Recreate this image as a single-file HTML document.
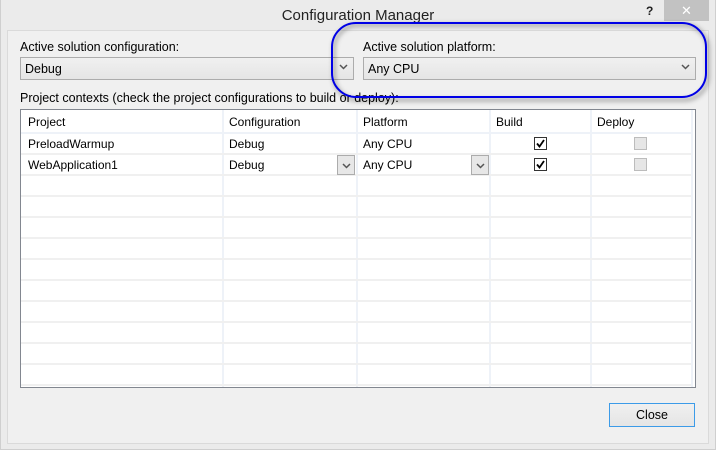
<!DOCTYPE html>
<html><head><meta charset="utf-8"><style>
*{box-sizing:border-box;margin:0;padding:0}
body{width:716px;height:450px;background:#ebebeb;font-family:"Liberation Sans",sans-serif;font-size:12px;color:#000;position:relative;overflow:hidden}
.a{position:absolute}
.outer{left:0;top:0;width:716px;height:450px;border:1px solid #cfcfcf;border-top:none}
.panel{left:7px;top:30px;width:702px;height:414px;background:#f0f0f0;border:1px solid #dadada}
.combo{height:23px;border:1px solid #acacac;background:linear-gradient(#f0f0f0,#e5e5e5);padding:4px 0 0 4px;font-size:12.5px}
.arr{position:absolute;right:5px;top:4px;width:9px;height:9px}
.grid{left:20px;top:109px;width:676px;height:279px;background:#fff;border:1px solid #828790}
.vl{position:absolute;top:0;width:2px;height:277px;background:#eef2f8}
.hl{position:absolute;left:0;width:670px;height:2px;background:#f0f0f0}
.t{position:absolute;font-size:12px}
.sb{position:absolute;width:18px;height:20px;border:1px solid #acacac;background:#e7e7e7}
.cb{position:absolute;width:13px;height:13px;border:1px solid #333;background:#fff}
.cbd{position:absolute;width:13px;height:13px;border:1px solid #bcbcbc;background:#e6e6e6}
</style></head><body>
<div class="a outer"></div>
<div class="a" style="left:0;top:0;width:716px;height:30px;text-align:center;font-size:15px;padding-top:7px;color:#222">Configuration Manager</div>
<div class="a" style="left:646px;top:4px;font-weight:bold;font-size:12px;color:#222">?</div>
<div class="a" style="left:664px;top:0;width:45px;height:21px;background:#c2c2c2;color:#fff;text-align:center;font-size:13px;line-height:21px">✕</div>
<div class="a panel"></div>
<div class="a" style="left:20px;top:40px;font-size:12.5px">Active solution configuration:</div>
<div class="a combo" style="left:20px;top:57px;width:334px">Debug<svg class="arr" viewBox="0 0 9 9"><path d="M1 3 L4.5 6.5 L8 3" stroke="#555" stroke-width="1.5" fill="none"/></svg></div>
<div class="a" style="left:363px;top:40px;font-size:12.5px">Active solution platform:</div>
<div class="a combo" style="left:363px;top:57px;width:333px">Any CPU<svg class="arr" viewBox="0 0 9 9"><path d="M1 3 L4.5 6.5 L8 3" stroke="#555" stroke-width="1.5" fill="none"/></svg></div>
<div class="a" style="left:20px;top:91px;font-size:12.5px">Project contexts (check the project configurations to build or deploy):</div>
<div class="a grid">
 <div class="vl" style="left:201px"></div><div class="vl" style="left:335px"></div><div class="vl" style="left:468px"></div><div class="vl" style="left:569px"></div><div class="vl" style="left:670px"></div>
 <div class="hl" style="top:22px;background:#eef2f8"></div>
 <div class="hl" style="top:43px"></div><div class="hl" style="top:64px"></div><div class="hl" style="top:85px"></div><div class="hl" style="top:106px"></div><div class="hl" style="top:127px"></div><div class="hl" style="top:148px"></div><div class="hl" style="top:169px"></div><div class="hl" style="top:190px"></div><div class="hl" style="top:211px"></div><div class="hl" style="top:232px"></div><div class="hl" style="top:253px"></div><div class="hl" style="top:274px"></div>
 <div class="t" style="left:7px;top:5px">Project</div>
 <div class="t" style="left:208px;top:5px">Configuration</div>
 <div class="t" style="left:342px;top:5px">Platform</div>
 <div class="t" style="left:475px;top:5px">Build</div>
 <div class="t" style="left:576px;top:5px">Deploy</div>
 <div class="t" style="left:7px;top:27px">PreloadWarmup</div>
 <div class="t" style="left:208px;top:27px">Debug</div>
 <div class="t" style="left:342px;top:27px">Any CPU</div>
 <div class="cb" style="left:513px;top:27px"><svg viewBox="0 0 11 11" width="11" height="11" style="position:absolute;left:0;top:0"><path d="M2 5.5 L4.5 8.5 L9 2" stroke="#000" stroke-width="1.8" fill="none"/></svg></div>
 <div class="cbd" style="left:613px;top:27px"></div>
 <div class="t" style="left:7px;top:48px">WebApplication1</div>
 <div class="t" style="left:208px;top:48px">Debug</div>
 <div class="sb" style="left:316px;top:45px"><svg viewBox="0 0 9 9" width="9" height="9" style="position:absolute;left:4px;top:5px"><path d="M1 3 L4.5 6.5 L8 3" stroke="#555" stroke-width="1.5" fill="none"/></svg></div>
 <div class="t" style="left:342px;top:48px">Any CPU</div>
 <div class="sb" style="left:450px;top:45px"><svg viewBox="0 0 9 9" width="9" height="9" style="position:absolute;left:4px;top:5px"><path d="M1 3 L4.5 6.5 L8 3" stroke="#555" stroke-width="1.5" fill="none"/></svg></div>
 <div class="cb" style="left:513px;top:48px"><svg viewBox="0 0 11 11" width="11" height="11" style="position:absolute;left:0;top:0"><path d="M2 5.5 L4.5 8.5 L9 2" stroke="#000" stroke-width="1.8" fill="none"/></svg></div>
 <div class="cbd" style="left:613px;top:48px"></div>
</div>
<div class="a" style="left:609px;top:403px;width:86px;height:24px;border:1px solid #3c9be8;background:linear-gradient(#f0f0f0,#e5e5e5);text-align:center;line-height:22px;font-size:12.5px">Close</div>
<svg class="a" style="left:326px;top:16px" width="390" height="92" viewBox="0 0 390 92">
 <defs><filter id="s" x="-10%" y="-20%" width="120%" height="140%"><feGaussianBlur stdDeviation="2"/></filter></defs>
 <rect x="8" y="9" width="374" height="75" rx="24" fill="none" stroke="#000" stroke-opacity="0.25" stroke-width="4" filter="url(#s)"/>
 <rect x="6" y="7" width="374" height="74" rx="24" fill="none" stroke="#0000e6" stroke-width="2"/>
</svg>
</body></html>
